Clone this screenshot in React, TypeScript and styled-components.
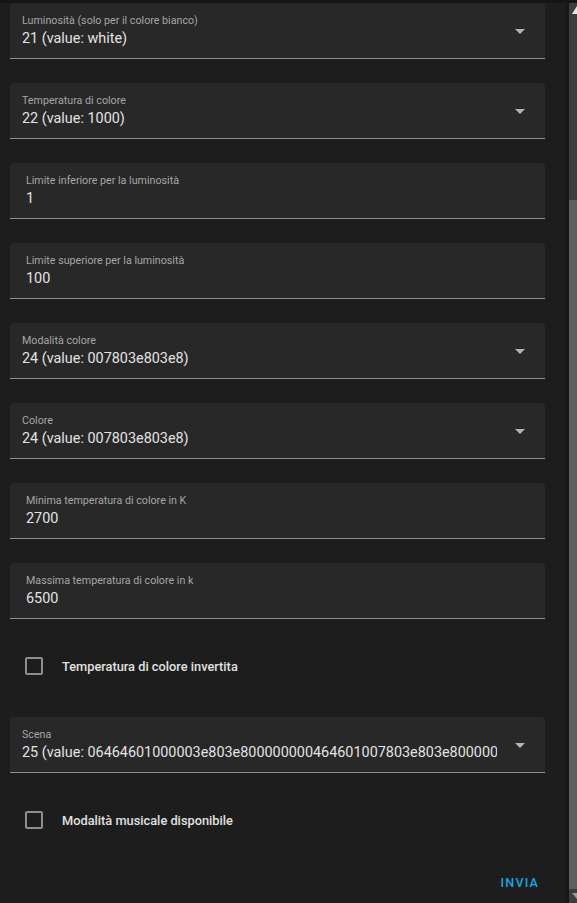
import React from "react";
import styled, { createGlobalStyle } from "styled-components";

const Global = createGlobalStyle`
  html, body { margin: 0; padding: 0; background: #1d1d1d; }
  body { font-family: Roboto, "Noto Sans", sans-serif; -webkit-font-smoothing: antialiased; }
`;

const Page = styled.div`
  display: flex;
  height: 903px;
  overflow: hidden;
  background: #1d1d1d;
  border-top: 3px solid #151515;
  box-sizing: border-box;
`;

const Main = styled.div`
  flex: 1;
  min-width: 0;
  display: flex;
  flex-direction: column;
  padding: 0 0 0 10px;
`;

const Form = styled.div`
  width: 535px;
  display: flex;
  flex-direction: column;
  gap: 24px;
`;

const Field = styled.div<{ $select?: boolean }>`
  height: 56px;
  box-sizing: border-box;
  background: #282828;
  border-radius: 4px 4px 0 0;
  border-bottom: 1px solid #8e8e8e;
  display: flex;
  align-items: center;
  padding: 0 20px 0 ${(p) => (p.$select ? 12 : 16)}px;
`;

const TextCol = styled.div`
  flex: 1;
  min-width: 0;
  overflow: hidden;
  display: flex;
  flex-direction: column;
`;

const Label = styled.div`
  font-size: 10.7px;
  line-height: 16px;
  color: #a6a6a6;
  white-space: nowrap;
`;

const Value = styled.div`
  font-size: 14.4px;
  line-height: 20px;
  color: #e3e3e3;
  white-space: nowrap;
  overflow: hidden;
`;

const Arrow = styled.svg`
  flex: none;
  width: 10px;
  height: 5px;
  margin-left: 18px;
  margin-top: 2px;
  fill: #b4b4b4;
`;

const CheckRow = styled.label`
  height: 50px;
  box-sizing: border-box;
  padding: 0 0 4px 15px;
  display: flex;
  align-items: center;
`;

const Box = styled.span`
  width: 18px;
  height: 18px;
  box-sizing: border-box;
  border: 2px solid #8e8e8e;
  border-radius: 2px;
  flex: none;
`;

const CheckText = styled.span`
  margin-left: 19px;
  font-size: 12.8px;
  font-weight: 500;
  color: #e1e1e1;
`;

const Actions = styled.div`
  width: 535px;
  display: flex;
  justify-content: flex-end;
  margin-top: 17px;
`;

const Button = styled.button`
  background: none;
  border: none;
  height: 36px;
  padding: 0 6px 0 8px;
  font-family: Roboto, sans-serif;
  font-size: 12.6px;
  font-weight: 500;
  letter-spacing: 1.15px;
  color: #16a5e6;
  text-transform: uppercase;
`;

const Scrollbar = styled.div`
  width: 11px;
  flex: none;
  display: flex;
  flex-direction: column;
  border-left: 3px solid #171717;
  box-sizing: border-box;
  background: #3d3d3d;
  overflow: hidden;
`;

const ArrowBtn = styled.div`
  height: 14px;
  flex: none;
  display: flex;
  align-items: center;
  justify-content: flex-end;
`;

const Track = styled.div`
  flex: 1;
  display: flex;
  flex-direction: column;
`;

const Thumb = styled.div`
  margin-top: 183px;
  flex: 1;
  background: #5e5e5e;
`;

type F = { label: string; value: string; select?: boolean };

const fields1: F[] = [
  { label: "Luminosità (solo per il colore bianco)", value: "21 (value: white)", select: true },
  { label: "Temperatura di colore", value: "22 (value: 1000)", select: true },
  { label: "Limite inferiore per la luminosità", value: "1" },
  { label: "Limite superiore per la luminosità", value: "100" },
  { label: "Modalità colore", value: "24 (value: 007803e803e8)", select: true },
  { label: "Colore", value: "24 (value: 007803e803e8)", select: true },
  { label: "Minima temperatura di colore in K", value: "2700" },
  { label: "Massima temperatura di colore in k", value: "6500" },
];

const FieldView = ({ label, value, select }: F) => (
  <Field $select={select}>
    <TextCol>
      <Label>{label}</Label>
      <Value>{value}</Value>
    </TextCol>
    {select && (
      <Arrow viewBox="0 0 10 5">
        <polygon points="0,0 10,0 5,5" />
      </Arrow>
    )}
  </Field>
);

export default function App() {
  return (
    <>
      <Global />
      <Page>
        <Main>
          <Form>
            {fields1.map((f) => (
              <FieldView key={f.label} {...f} />
            ))}
            <CheckRow>
              <Box />
              <CheckText>Temperatura di colore invertita</CheckText>
            </CheckRow>
            <FieldView
              label="Scena"
              value="25 (value: 06464601000003e803e800000000464601007803e803e80000000000000000000000000)"
              select
            />
            <CheckRow>
              <Box />
              <CheckText>Modalità musicale disponibile</CheckText>
            </CheckRow>
          </Form>
          <Actions>
            <Button>Invia</Button>
          </Actions>
        </Main>
        <Scrollbar>
          <ArrowBtn>
            <svg width="5" height="8" viewBox="0 0 5 8">
              <polygon points="5,0 5,8 0,8" fill="#e8e8e8" />
            </svg>
          </ArrowBtn>
          <Track>
            <Thumb />
          </Track>
          <ArrowBtn>
            <svg width="5" height="6" viewBox="0 0 5 6">
              <polygon points="0,0 5,0 5,6" fill="#9a9a9a" />
            </svg>
          </ArrowBtn>
        </Scrollbar>
      </Page>
    </>
  );
}
